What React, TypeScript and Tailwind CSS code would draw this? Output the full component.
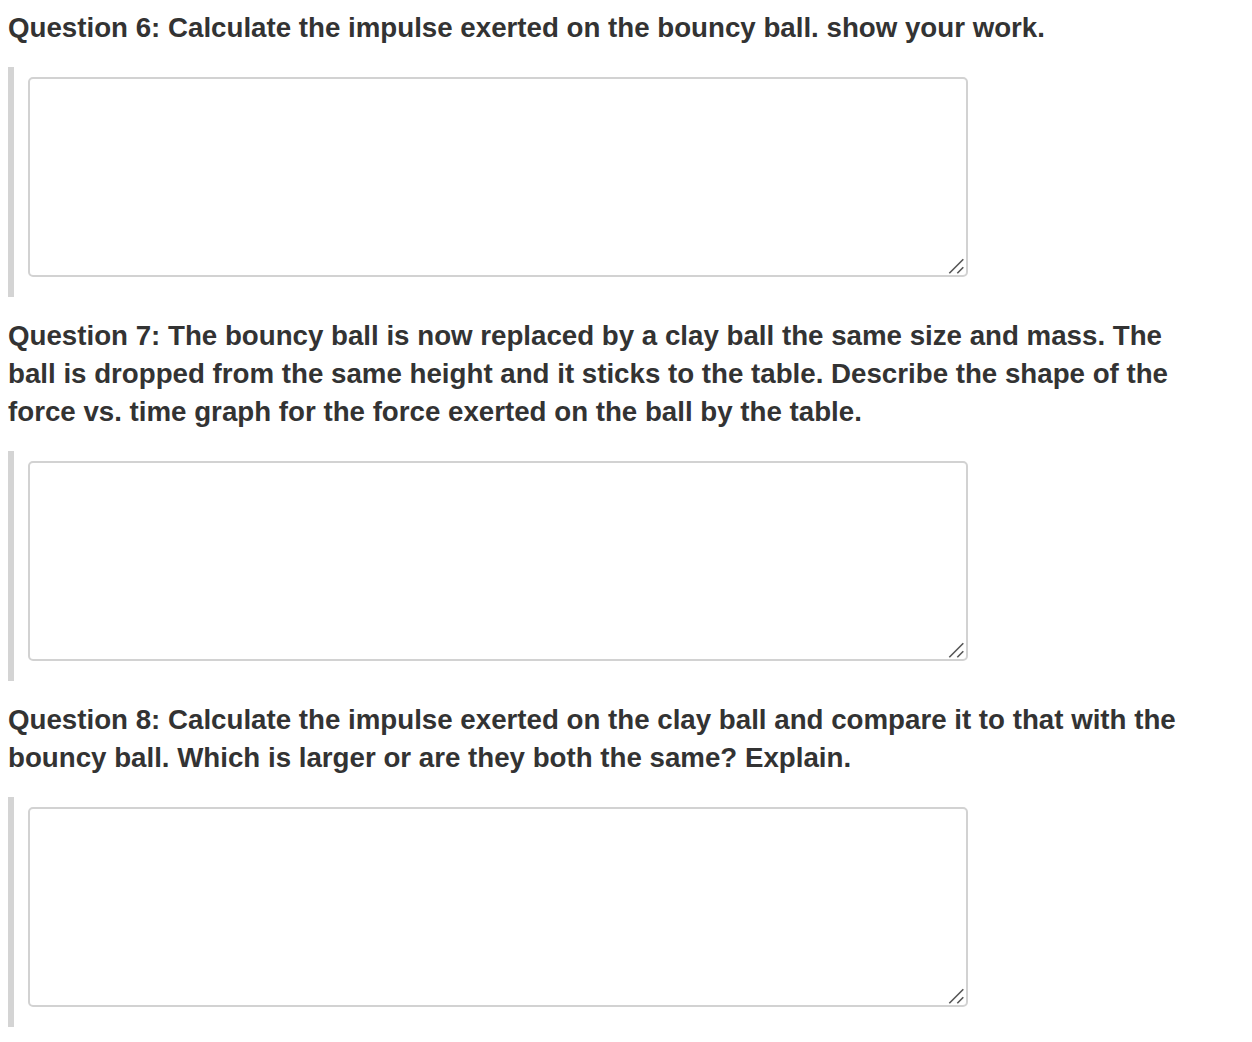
import React from "react";

const questions = [
  "Question 6: Calculate the impulse exerted on the bouncy ball. show your work.",
  "Question 7: The bouncy ball is now replaced by a clay ball the same size and mass. The ball is dropped from the same height and it sticks to the table. Describe the shape of the force vs. time graph for the force exerted on the ball by the table.",
  "Question 8: Calculate the impulse exerted on the clay ball and compare it to that with the bouncy ball. Which is larger or are they both the same? Explain.",
];

function ResizeHandle() {
  return (
    <svg
      className="absolute right-0 bottom-0 pointer-events-none"
      width="20"
      height="20"
      viewBox="0 0 20 20"
    >
      <line x1="1.3" y1="16.3" x2="15.3" y2="2.3" stroke="#555555" strokeWidth="1.6" />
      <line x1="9.3" y1="16.3" x2="15.3" y2="10.3" stroke="#555555" strokeWidth="1.6" />
    </svg>
  );
}

export default function App() {
  return (
    <div
      className="bg-white min-h-[1042px] pt-[9px] pl-2 pr-2 text-[#333333]"
      style={{ fontFamily: '"Liberation Sans", Arial, Helvetica, sans-serif' }}
    >
      {questions.map((q, i) => (
        <div key={i} className="mb-5">
          <h2 className="m-0 max-w-[1190px] text-[27.7px] leading-[38px] font-bold text-[#333333]">{q}</h2>
          <div className="mt-5 border-l-[6px] border-[#d4d4d4] pl-[14px] pt-[10px] pb-[20px]">
            <div className="relative w-[940px] h-[200px]">
              <textarea className="block w-[940px] h-[200px] border-2 border-[#d2d2d2] rounded-[5px] bg-white resize-none outline-none" />
              <ResizeHandle />
            </div>
          </div>
        </div>
      ))}
    </div>
  );
}
